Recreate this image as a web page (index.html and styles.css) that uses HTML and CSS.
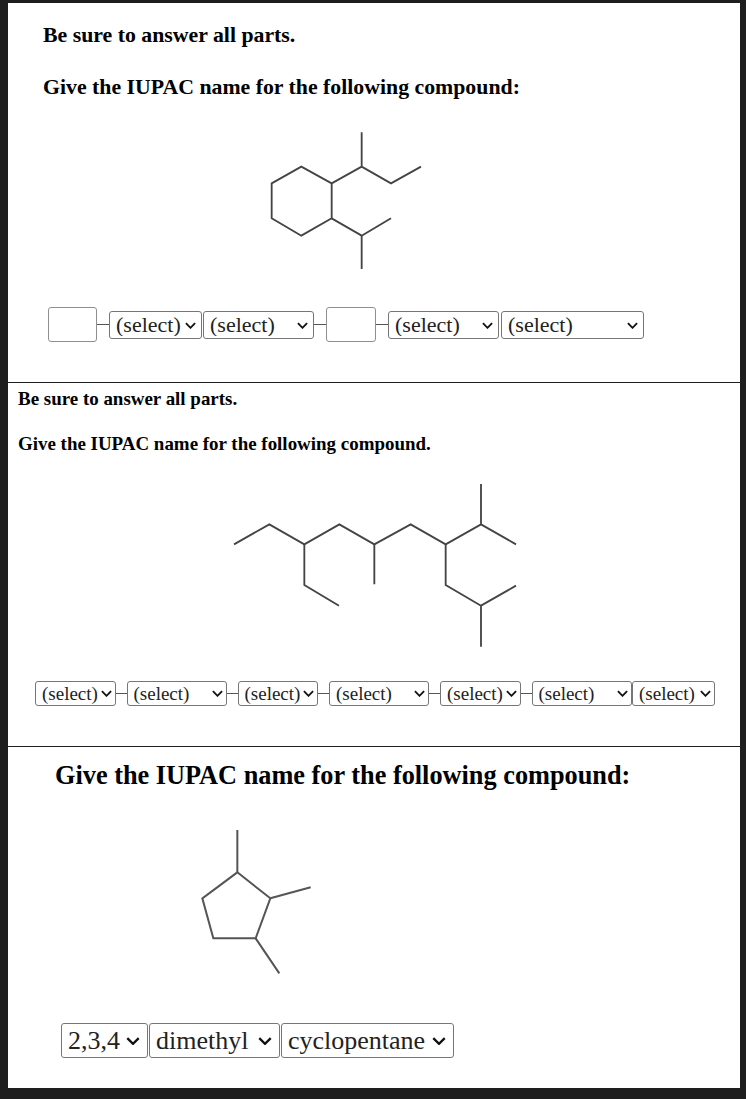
FILE: index.html
```html
<!DOCTYPE html>
<html lang="en">
<head>
    <meta charset="UTF-8">
    <meta name="viewport" content="width=device-width, initial-scale=1.0">
    <title>IUPAC naming</title>
    <link rel="stylesheet" href="styles.css">
</head>
<body>

<div class="sheet">
    <section class="question q1">
        <p class="note">Be sure to answer all parts.</p>
        <p class="prompt">Give the IUPAC name for the following compound:</p>
        <svg class="mol" width="200" height="160" viewBox="0 0 600 480">
            <path d="M184 140 275 190V295L184 347 95 295V190Z"/>
            <path d="M275 190 365 140 453 190 543 140M365 140V37"/>
            <path d="M275 295 365 347 453 295M365 347V447"/>
        </svg>
        <div class="answer">
            <input type="text" class="box">
            <span class="dash"></span>
            <select class="w93"><option>(select)</option></select>
            <select class="w111"><option>(select)</option></select>
            <span class="dash"></span>
            <input type="text" class="box wide">
            <span class="dash"></span>
            <select class="w111"><option>(select)</option></select>
            <select class="w143"><option>(select)</option></select>
        </div>
    </section>

    <section class="question q2">
        <p class="note">Be sure to answer all parts.</p>
        <p class="prompt">Give the IUPAC name for the following compound.</p>
        <svg class="mol" width="310" height="180" viewBox="0 0 930 540">
            <path d="M42 208 148 148 253 208 358 148 463 208 572 148 677 208 783 148 888 208M783 148V27"/>
            <path d="M253 208V330L357 392M463 208V328"/>
            <path d="M677 208V330L783 392 888 332M783 392V515"/>
        </svg>
        <div class="answer">
            <select class="s81"><option>(select)</option></select>
            <span class="dash"></span>
            <select class="s100"><option>(select)</option></select>
            <span class="dash"></span>
            <select class="s81"><option>(select)</option></select>
            <span class="dash"></span>
            <select class="s100"><option>(select)</option></select>
            <span class="dash"></span>
            <select class="s81"><option>(select)</option></select>
            <span class="dash"></span>
            <select class="s100"><option>(select)</option></select>
            <select class="s83"><option>(select)</option></select>
        </div>
    </section>

    <section class="question q3">
        <p class="prompt">Give the IUPAC name for the following compound:</p>
        <svg class="mol" width="150" height="160" viewBox="0 0 450 480">
            <path d="M172 157 271 235 227 355H100L67 235Z"/>
            <path d="M172 157V30M271 235 392 202M227 355 298 460"/>
        </svg>
        <div class="answer">
            <select class="l87"><option>2,3,4</option></select>
            <select class="l131"><option>dimethyl</option></select>
            <select class="l173"><option>cyclopentane</option></select>
        </div>
    </section>
</div>

</body>
</html>
```

FILE: styles.css
```css
body {
    margin: 0;
    background-color: #1E1E1E;
    font-family: "Liberation Serif", "Times New Roman", serif;
    color: #000;
}
.sheet {
    margin: 3px 6px 11px 8px;
    background: white;
}
.question {
    border-bottom: 1px solid #1E1E1E;
}
.question:last-child {
    border-bottom: none;
}
p {
    margin: 0;
    font-weight: bold;
}
.mol {
    display: block;
    fill: none;
    stroke: #444;
    stroke-width: 5.5;
}
.answer {
    display: flex;
    align-items: center;
}
select {
    appearance: none;
    box-sizing: border-box;
    margin: 0;
    padding: 0 0 0 6px;
    background-color: white;
    background-image: url("data:image/svg+xml,%3Csvg xmlns='http://www.w3.org/2000/svg' viewBox='0 0 12 7'%3E%3Cpath d='M1 1 6 6 11 1' fill='none' stroke='%23111' stroke-width='2'/%3E%3C/svg%3E");
    background-repeat: no-repeat;
    color: #222;
    border: 1px solid #767676;
    border-radius: 3px;
    font-family: inherit;
}
.box {
    box-sizing: border-box;
    width: 49px;
    height: 35px;
    margin: 0;
    padding: 0;
    background: white;
    border: 1px solid #8F8F8F;
    border-radius: 3px;
}
.box.wide { width: 50px; }
.dash {
    width: 12px;
    height: 1px;
    background: #555;
}

/* first question */
.q1 {
    height: 380px;
    padding-left: 35px;
    box-sizing: border-box;
}
.q1 .note, .q1 .prompt {
    font-size: 21.8px;
    line-height: 26px;
}
.q1 .note { padding-top: 19px; }
.q1 .prompt { margin-top: 26px; }
.q1 .mol { margin: 20px 0 0 197px; }
.q1 .answer { margin: 27px 0 0 5px; }
.q1 select {
    height: 28px;
    margin-top: 1px;
    padding-bottom: 2px;
    font-size: 22px;
    background-size: 11px 7px;
    background-position: right 5px center;
}
.w93 { width: 93px; margin-right: 1px; }
.w111 { width: 111px; }
.w143 { width: 143px; margin-left: 2px; }

/* second question */
.q2 {
    height: 364px;
    padding-left: 10px;
    box-sizing: border-box;
}
.q2 .note, .q2 .prompt {
    font-size: 18.95px;
    line-height: 22px;
}
.q2 .note { padding-top: 5px; }
.q2 .prompt { margin-top: 23px; }
.q2 .mol { margin: 20px 0 0 202px; }
.q2 .answer { margin: 26px 0 0 17px; }
.q2 .dash { width: 11px; }
.q2 select {
    height: 25px;
    font-size: 19px;
    background-size: 11px 7px;
    background-position: right 3px center;
}
.s81 { width: 80.5px; }
.s100 { width: 100px; }
.s83 { width: 83px; margin-left: 0.5px; }

/* third question */
.q3 {
    height: 341px;
    padding-left: 47px;
    box-sizing: border-box;
}
.q3 .prompt {
    padding-top: 14px;
    font-size: 26.3px;
    line-height: 30px;
}
.q3 .mol {
    margin: 29px 0 0 125px;
    stroke: #555;
    stroke-width: 6;
}
.q3 .answer { margin: 43px 0 0 6px; }
.q3 select {
    height: 35px;
    font-size: 26px;
    background-size: 14px 8px;
    background-position: right 7px center;
}
.l87 { width: 87px; margin-right: 1px; }
.l131 { width: 131px; margin-right: 1px; }
.l173 { width: 173px; }
```
